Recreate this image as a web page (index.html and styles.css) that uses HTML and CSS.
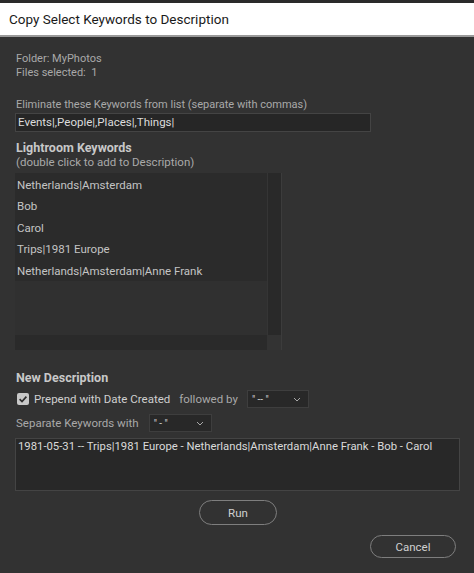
FILE: index.html
```html
<!DOCTYPE html>
<html>
<head>
<meta charset="utf-8">
<link rel="stylesheet" href="styles.css">
</head>
<body>
<div class="topstrip"></div>
<div class="titlebar">Copy Select Keywords to Description</div>
<div class="dialog">
  <div class="info">
    <div>Folder: MyPhotos</div>
    <div>Files selected:&nbsp; 1</div>
  </div>
  <div class="label elim">Eliminate these Keywords from list (separate with commas)</div>
  <div class="textinput">Events|,People|,Places|,Things|</div>

  <div class="heading lr">Lightroom Keywords</div>
  <div class="label sub">(double click to add to Description)</div>
  <div class="listbox">
    <div class="listmain">
      <div class="items">
        <div class="item">Netherlands|Amsterdam</div>
        <div class="item">Bob</div>
        <div class="item">Carol</div>
        <div class="item">Trips|1981 Europe</div>
        <div class="item">Netherlands|Amsterdam|Anne Frank</div>
      </div>
      <div class="empty"></div>
      <div class="hscroll"></div>
    </div>
    <div class="vscroll">
      <div class="vtrack"></div>
      <div class="corner"></div>
    </div>
  </div>

  <div class="heading nd">New Description</div>
  <div class="row r1">
    <span class="check"><svg width="12" height="12" viewBox="0 0 12 12"><path d="M2.6 6.2 L5 8.5 L9.4 3.6" fill="none" stroke="#2e2e2e" stroke-width="1.7"/></svg></span>
    <span class="bright">Prepend with Date Created</span>
    <span class="label fb">followed by</span>
    <span class="select s1"><span>" -- "</span><svg width="8" height="5" viewBox="0 0 8 5"><path d="M1 1 L4 4 L7 1" fill="none" stroke="#a8a8a8" stroke-width="1"/></svg></span>
  </div>
  <div class="row r2">
    <span class="label">Separate Keywords with</span>
    <span class="select s2"><span>" - "</span><svg width="8" height="5" viewBox="0 0 8 5"><path d="M1 1 L4 4 L7 1" fill="none" stroke="#a8a8a8" stroke-width="1"/></svg></span>
  </div>
  <div class="textarea">1981-05-31 -- Trips|1981 Europe - Netherlands|Amsterdam|Anne Frank - Bob - Carol</div>
  <div class="btnrow1"><div class="btn run">Run</div></div>
  <div class="btnrow2"><div class="btn cancel">Cancel</div></div>
</div>
</body>
</html>
```
FILE: styles.css
```css
html, body {
  margin: 0;
  padding: 0;
  background: #323232;
  width: 474px;
  height: 573px;
  overflow: hidden;
  font-family: Roboto, "Noto Sans", sans-serif;
}
.topstrip {
  height: 3px;
  background: #2a2a2a;
}
.titlebar {
  height: 32px;
  background: #ffffff;
  border-bottom: 2px solid #9a9a9a;
  color: #1a1a1a;
  font-size: 13.5px;
  line-height: 32px;
  padding-left: 9px;
}
.dialog {
  padding: 0 15px 0 15px;
  font-size: 11px;
  color: #a9a9a9;
}
.info {
  margin-top: 15px;
  padding-left: 1px;
  line-height: 14px;
}
.label { color: #a9a9a9; }
.elim {
  margin-top: 18px;
  padding-left: 1px;
  line-height: 14px;
}
.textinput {
  width: 352px;
  height: 17px;
  margin-top: 1px;
  background: #262626;
  border: 1px solid #444444;
  color: #dcdcdc;
  font-size: 11.5px;
  line-height: 17px;
  padding-left: 2px;
}
.heading {
  font-weight: bold;
  color: #c8c8c8;
  font-size: 12.5px;
  padding-left: 1px;
}
.lr {
  margin-top: 8px;
  line-height: 15px;
}
.sub {
  padding-left: 1px;
  line-height: 14px;
  font-size: 11.5px;
}
.listbox {
  margin-top: 4px;
  width: 266px;
  height: 177px;
  display: flex;
  background: #2b2b2b;
  border-right: 1px solid #3c3c3c;
}
.listmain {
  width: 252px;
  display: flex;
  flex-direction: column;
}
.items {
  height: 107px;
  padding-top: 1px;
}
.item {
  height: 21.4px;
  line-height: 22px;
  color: #c4c4c4;
  font-size: 11.5px;
  padding-left: 2px;
}
.empty {
  flex: 1;
  background: #303030;
}
.hscroll {
  height: 15px;
  background: #2a2a2a;
}
.vscroll {
  width: 14px;
  display: flex;
  flex-direction: column;
}
.vtrack {
  flex: 1;
  background: #292929;
  border-left: 1px solid #353535;
}
.corner {
  height: 15px;
  background: #333333;
}
.nd {
  margin-top: 20px;
  line-height: 15px;
}
.row {
  display: flex;
  align-items: center;
}
.r1 {
  margin-top: 5px;
  height: 18px;
}
.check {
  width: 12px;
  height: 12px;
  margin-left: 2px;
  background: #c8c8c8;
  border-radius: 2px;
  display: flex;
  align-items: center;
  justify-content: center;
}
.bright {
  color: #cfcfcf;
  margin-left: 5px;
  font-size: 11.5px;
}
.fb {
  margin-left: 9px;
  font-size: 11.5px;
}
.select {
  display: flex;
  align-items: center;
  justify-content: space-between;
  height: 16px;
  background: #282828;
  border: 1px solid #3e3e3e;
  color: #cfcfcf;
  font-size: 10px;
  padding: 0 7px 0 4px;
  box-sizing: content-box;
}
.s1 {
  margin-left: 9px;
  width: 49px;
}
.s2 {
  margin-left: 10px;
  width: 50px;
}
.r2 {
  margin-top: 6px;
  height: 18px;
}
.r2 .label {
  padding-left: 1px;
  font-size: 11.5px;
}
.textarea {
  margin-top: 6px;
  width: 441px;
  height: 51px;
  background: #282828;
  border: 1px solid #444444;
  color: #dadada;
  font-size: 11.3px;
  line-height: 16px;
  padding: 0 0 0 2px;
}
.btnrow1 {
  display: flex;
  padding-left: 184px;
  margin-top: 9px;
}
.btnrow2 {
  display: flex;
  padding-left: 355px;
  margin-top: 10px;
}
.btn {
  border: 1.5px solid #7e7e7e;
  border-radius: 13px;
  color: #d0d0d0;
  font-size: 11.5px;
  display: flex;
  align-items: center;
  justify-content: center;
}
.run {
  width: 76px;
  height: 23px;
}
.cancel {
  width: 84px;
  height: 21px;
}
```
